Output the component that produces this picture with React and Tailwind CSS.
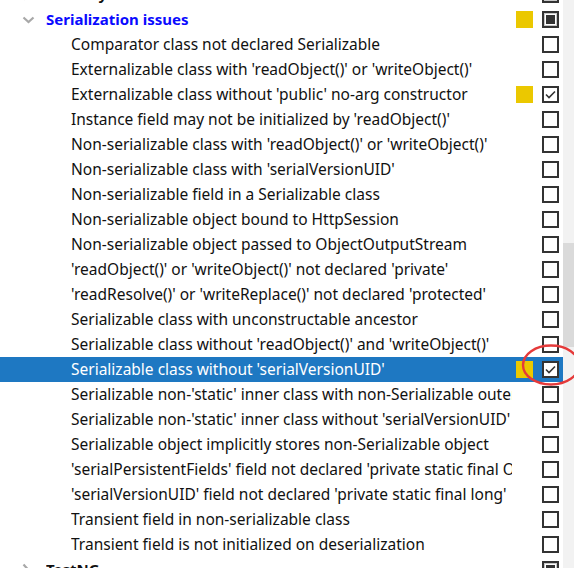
import React from "react";

const items = [
  { t: "Comparator class not declared Serializable" },
  { t: "Externalizable class with 'readObject()' or 'writeObject()'" },
  { t: "Externalizable class without 'public' no-arg constructor", y: true, c: true },
  { t: "Instance field may not be initialized by 'readObject()'" },
  { t: "Non-serializable class with 'readObject()' or 'writeObject()'" },
  { t: "Non-serializable class with 'serialVersionUID'" },
  { t: "Non-serializable field in a Serializable class" },
  { t: "Non-serializable object bound to HttpSession" },
  { t: "Non-serializable object passed to ObjectOutputStream" },
  { t: "'readObject()' or 'writeObject()' not declared 'private'" },
  { t: "'readResolve()' or 'writeReplace()' not declared 'protected'" },
  { t: "Serializable class with unconstructable ancestor" },
  { t: "Serializable class without 'readObject()' and 'writeObject()'" },
  { t: "Serializable class without 'serialVersionUID'", y: true, c: true, sel: true },
  { t: "Serializable non-'static' inner class with non-Serializable outer class" },
  { t: "Serializable non-'static' inner class without 'serialVersionUID'" },
  { t: "Serializable object implicitly stores non-Serializable object" },
  { t: "'serialPersistentFields' field not declared 'private static final ObjectStreamField[]'" },
  { t: "'serialVersionUID' field not declared 'private static final long'" },
  { t: "Transient field in non-serializable class" },
  { t: "Transient field is not initialized on deserialization" },
];

function Box({ state }) {
  return (
    <div className="w-[17px] h-[17px] border-2 border-[#333333] bg-white flex items-center justify-center shrink-0">
      {state === "checked" && (
        <svg width="13" height="13" viewBox="0 0 13 13">
          <path d="M2 6.5 L5 9.5 L11 3.5" fill="none" stroke="#333333" strokeWidth="1.6" />
        </svg>
      )}
      {state === "mixed" && (
        <div className="w-[13px] h-[13px] border-[1.5px] border-[#c8c8c8] flex items-center justify-center">
          <div className="w-[9px] h-[9px] bg-[#333333]" />
        </div>
      )}
    </div>
  );
}

function Yellow({ show }) {
  return <div className={"w-[17px] h-[17px] shrink-0 " + (show ? "bg-[#ebc800]" : "")} />;
}

function Header({ label, open, yellow, state, color }) {
  return (
    <div className="h-[25px] shrink-0 flex items-center">
      <div className="w-[46px] shrink-0 flex items-center pl-[22px]">
        {open ? (
          <svg width="13" height="8" viewBox="0 0 13 8">
            <path d="M1.5 1.5 L6.5 6 L11.5 1.5" fill="none" stroke="#a8a8a8" strokeWidth="2.2" />
          </svg>
        ) : (
          <svg width="8" height="13" viewBox="0 0 8 13">
            <path d="M1.5 1.5 L6 6.5 L1.5 11.5" fill="none" stroke="#a8a8a8" strokeWidth="2.2" />
          </svg>
        )}
      </div>
      <div className={"w-[466px] shrink-0 overflow-hidden whitespace-nowrap font-bold text-[15px] " + color}>
        {label}
      </div>
      <div className="w-[4px] shrink-0" />
      <Yellow show={yellow} />
      <div className="w-[9px] shrink-0" />
      <Box state={state} />
    </div>
  );
}

export default function App() {
  return (
    <div
      className="w-[574px] h-[568px] overflow-hidden bg-white flex relative"
      style={{ fontFamily: '"Noto Sans", "Open Sans", sans-serif' }}
    >
      <div className="w-[563px] shrink-0 flex flex-col -mt-[18px]">
        <Header label="Security" open={false} yellow={false} state="mixed" color="text-[#111111]" />
        <Header label="Serialization issues" open yellow state="mixed" color="text-[#0a0aff]" />
        {items.map((it, i) => (
          <div
            key={i}
            className={"h-[25px] shrink-0 flex items-center " + (it.sel ? "bg-[#1e78c2]" : "")}
          >
            <div className="w-[71px] shrink-0" />
            <div
              className={
                "w-[441px] shrink-0 overflow-hidden whitespace-nowrap text-[15.5px] " +
                (it.sel ? "text-white" : "text-[#111111]")
              }
            >
              {it.t}
            </div>
            <div className="w-[4px] shrink-0" />
            <Yellow show={it.y} />
            <div className="w-[9px] shrink-0" />
            <Box state={it.c ? "checked" : "none"} />
          </div>
        ))}
        <Header label="TestNG" open={false} yellow={false} state="mixed" color="text-[#111111]" />
      </div>
      <div className="flex-1 bg-[#f2f2f2] flex flex-col">
        <div className="h-[243px] shrink-0" />
        <div className="h-[104px] shrink-0 bg-[#dadada]" />
      </div>
      <svg
        className="absolute left-[520px] top-[343px]"
        width="64"
        height="44"
        viewBox="0 0 64 44"
      >
        <ellipse cx="31" cy="22" rx="28" ry="19.5" fill="none" stroke="#e53a3a" strokeWidth="2.4" />
      </svg>
    </div>
  );
}
